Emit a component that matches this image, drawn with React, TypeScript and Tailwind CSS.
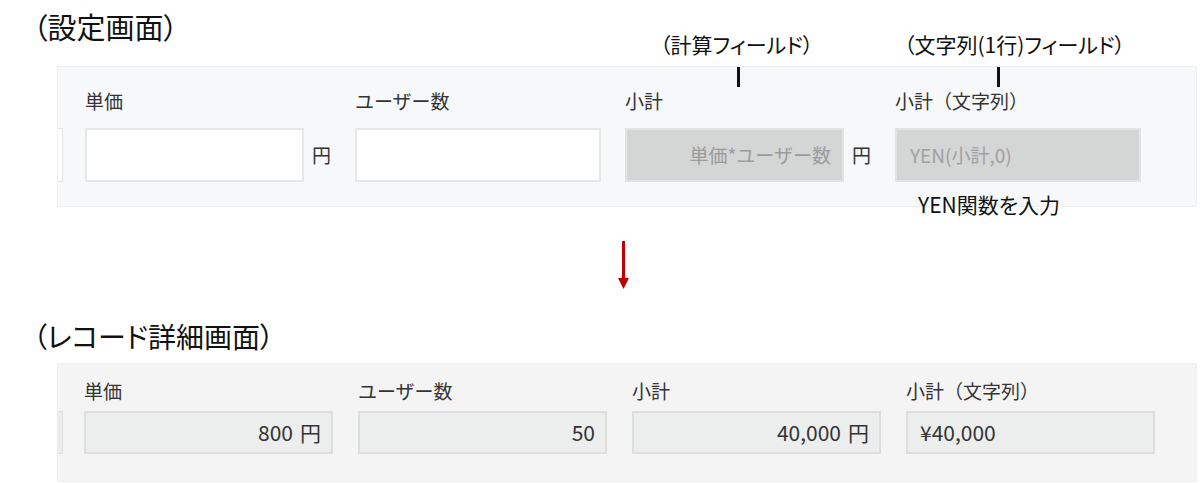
const font = "font-['Noto_Sans_CJK_JP','Noto_Sans',sans-serif]";

function Label({ children }: { children: React.ReactNode }) {
  return <div className="text-[19px] leading-[24px] text-[#333] whitespace-nowrap">{children}</div>;
}

function SettingsPanel() {
  return (
    <div className="ml-[57px] w-[1140px] bg-[#f7f8f9] border border-[#eeefef] pt-[22px] pb-[24px]">
      <div className="flex items-end">
        {/* edge of the previous field, cut off by the panel */}
        <div className="w-[5px] h-[54px] bg-white border-y border-r border-[#e2e4e4] shrink-0" />
        <div className="ml-[22px] flex gap-[24px]">
          <div className="w-[246px] shrink-0">
            <Label>単価</Label>
            <div className="mt-[15px] flex items-center">
              <div className="w-[223px] h-[54px] bg-white border-2 border-[#e6e8e8]" />
              <span className="ml-[8px] text-[19px] text-[#333]">円</span>
            </div>
          </div>
          <div className="w-[246px] shrink-0">
            <Label>ユーザー数</Label>
            <div className="mt-[15px] w-[246px] h-[54px] bg-white border-2 border-[#e6e8e8]" />
          </div>
          <div className="w-[246px] shrink-0">
            <Label>小計</Label>
            <div className="mt-[15px] flex items-center">
              <div className="w-[223px] h-[54px] bg-[#d4d5d5] border-2 border-[#e2e4e4] flex items-center justify-end pr-[11px] text-[19px] text-[#9b9b9b] whitespace-nowrap">
                単価*ユーザー数
              </div>
              <span className="ml-[8px] text-[19px] text-[#333]">円</span>
            </div>
          </div>
          <div className="w-[246px] shrink-0">
            <Label>小計（文字列）</Label>
            <div className="mt-[15px] w-[246px] h-[54px] bg-[#d4d5d5] border-2 border-[#e2e4e4] flex items-center pl-[13px] text-[19px] text-[#a0a0a0] whitespace-nowrap">
              YEN(小計,0)
            </div>
          </div>
        </div>
      </div>
    </div>
  );
}

function ValueField({ value, unit, align }: { value: string; unit?: string; align: "left" | "right" }) {
  return (
    <div
      className={
        "mt-[8px] w-[249px] h-[43px] bg-[#eceded] border-2 border-[#dcdddd] flex items-center text-[21px] text-[#333] whitespace-nowrap " +
        (align === "right" ? "justify-end pr-[10px]" : "pl-[12px]")
      }
    >
      <span>{value}</span>
      {unit && <span className="ml-[7px]">{unit}</span>}
    </div>
  );
}

function DetailPanel() {
  return (
    <div className="ml-[57px] w-[1140px] bg-[#f4f4f4] border border-[#efefef] pt-[15px] pb-[27px]">
      <div className="flex items-end">
        <div className="w-[5px] h-[43px] bg-[#eceded] border-y border-r border-[#dcdddd] shrink-0" />
        <div className="ml-[21px] flex gap-[25px]">
          <div className="w-[249px] shrink-0">
            <Label>単価</Label>
            <ValueField value="800" unit="円" align="right" />
          </div>
          <div className="w-[249px] shrink-0">
            <Label>ユーザー数</Label>
            <ValueField value="50" align="right" />
          </div>
          <div className="w-[249px] shrink-0">
            <Label>小計</Label>
            <ValueField value="40,000" unit="円" align="right" />
          </div>
          <div className="w-[249px] shrink-0">
            <Label>小計（文字列）</Label>
            <ValueField value="¥40,000" align="left" />
          </div>
        </div>
      </div>
    </div>
  );
}

export default function App() {
  return (
    <div className={`w-[1200px] h-[483px] bg-white overflow-hidden text-[#222] ${font}`}>
      <section className="relative">
        <h2 className="pl-[33px] pt-[10px] mb-[23px] text-[29px] leading-[33px] [font-feature-settings:'palt'] text-[#111]">
          （設定画面）
        </h2>
        <SettingsPanel />

        {/* callouts */}
        <div className="absolute left-[660px] top-[31px] text-[21px] leading-[26px] [font-feature-settings:'palt'] text-[#111] whitespace-nowrap">
          （計算フィールド）
        </div>
        <div className="absolute left-[737px] top-[67px] w-[3px] h-[20px] bg-[#111]" />
        <div className="absolute left-[904px] top-[31px] text-[21px] leading-[26px] [font-feature-settings:'palt'] text-[#111] whitespace-nowrap">
          （文字列(1行)フィールド）
        </div>
        <div className="absolute left-[997px] top-[67px] w-[3px] h-[20px] bg-[#111]" />
        <div className="absolute left-[918px] top-[191px] text-[21px] leading-[26px] [font-feature-settings:'palt'] text-[#111] whitespace-nowrap">
          YEN関数を入力
        </div>
      </section>

      <div className="pl-[618px] pt-[34px]">
        <svg width="11" height="49" viewBox="0 0 11 49">
          <line x1="5.5" y1="0" x2="5.5" y2="40" stroke="#c00000" strokeWidth="3" />
          <polygon points="0,37 11,37 5.5,48" fill="#c00000" />
        </svg>
      </div>

      <h2 className="pl-[33px] mt-[30px] mb-[11px] text-[28px] leading-[32px] [font-feature-settings:'palt'] text-[#111]">
        （レコード詳細画面）
      </h2>
      <DetailPanel />
    </div>
  );
}
